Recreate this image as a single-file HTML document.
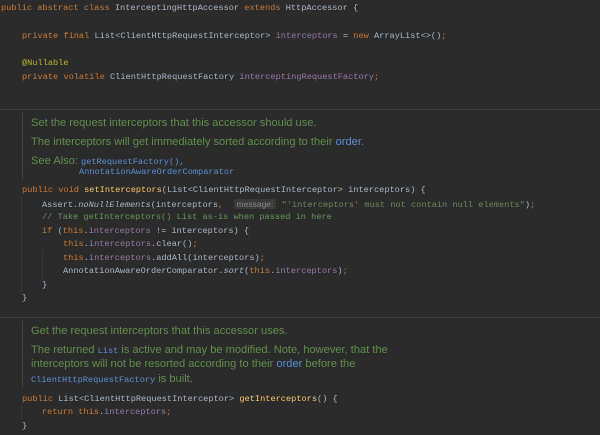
<!DOCTYPE html><html><head><style>
body{margin:0;width:600px;height:435px;background:#2b2b2b;overflow:hidden;position:relative}
.l{position:absolute;white-space:pre;font-family:"Liberation Mono",monospace;font-size:8.65px;line-height:14px;color:#a9b7c6}
.d{position:absolute;white-space:pre;font-family:"Liberation Sans",sans-serif;font-size:11.1px;line-height:14px;color:#5f8f4a}
.k{color:#cc7832}.f{color:#9876aa}.a{color:#bbb529}.m{color:#ffc66d}.s{color:#6a8759}.c{color:#629755}.i{font-style:italic}
.b{color:#5a8fd6}.bm{color:#5a8fd6;font-family:"Liberation Mono",monospace;font-size:8.65px}
.sep{position:absolute;left:0;width:600px;height:1px;background:#3c3c3c}
.bar{position:absolute;left:22px;width:1px;background:#3d4a3a}
.g{position:absolute;width:1px;background:#363636}
.hint{background:#3a3a3a;color:#8a8a8a;font-family:"Liberation Sans",sans-serif;font-size:8.5px;padding:0 3px;border-radius:2px}
</style></head><body>
<div class="l" style="left:1px;top:1px"><span class="k">public abstract class </span>InterceptingHttpAccessor <span class="k">extends </span>HttpAccessor {</div>
<div class="l" style="left:22px;top:29px"><span class="k">private final </span>List&lt;ClientHttpRequestInterceptor&gt; <span class="f">interceptors </span>= <span class="k">new </span>ArrayList&lt;&gt;()<span class="k">;</span></div>
<div class="l" style="left:22px;top:56px"><span class="a">@Nullable</span></div>
<div class="l" style="left:22px;top:70px"><span class="k">private volatile </span>ClientHttpRequestFactory <span class="f">interceptingRequestFactory</span><span class="k">;</span></div>
<div class="sep" style="top:109px"></div>
<div class="bar" style="top:113px;height:67px"></div>
<div class="d" style="left:31px;top:116px">Set the request interceptors that this accessor should use.</div>
<div class="d" style="left:31px;top:135px">The interceptors will get immediately sorted according to their <span class="b">order</span>.</div>
<div class="d" style="left:31px;top:154px">See Also: <span class="bm">getRequestFactory(),</span></div>
<div class="l" style="left:79px;top:165px;color:#5a8fd6">AnnotationAwareOrderComparator</div>
<div class="g" style="left:21px;top:196px;height:98px"></div>
<div class="g" style="left:42px;top:250px;height:30px"></div>
<div class="l" style="left:22px;top:183px"><span class="k">public void </span><span class="m">setInterceptors</span>(List&lt;ClientHttpRequestInterceptor&gt; interceptors) {</div>
<div class="l" style="left:42px;top:197px">Assert.<span class="i">noNullElements</span>(interceptors<span class="k">, </span> <span class="hint">message:</span> <span class="s">"'interceptors' must not contain null elements"</span>)<span class="k">;</span></div>
<div class="l" style="left:42px;top:210px"><span class="c">// Take getInterceptors() List as-is when passed in here</span></div>
<div class="l" style="left:42px;top:224px"><span class="k">if </span>(<span class="k">this</span>.<span class="f">interceptors </span>!= interceptors) {</div>
<div class="l" style="left:63px;top:237px"><span class="k">this</span>.<span class="f">interceptors</span>.clear()<span class="k">;</span></div>
<div class="l" style="left:63px;top:251px"><span class="k">this</span>.<span class="f">interceptors</span>.addAll(interceptors)<span class="k">;</span></div>
<div class="l" style="left:63px;top:264px">AnnotationAwareOrderComparator.<span class="i">sort</span>(<span class="k">this</span>.<span class="f">interceptors</span>)<span class="k">;</span></div>
<div class="l" style="left:42px;top:278px">}</div>
<div class="l" style="left:22px;top:291px">}</div>
<div class="sep" style="top:317px"></div>
<div class="bar" style="top:321px;height:67px"></div>
<div class="d" style="left:31px;top:324px">Get the request interceptors that this accessor uses.</div>
<div class="d" style="left:31px;top:343px">The returned <span class="bm">List</span> is active and may be modified. Note, however, that the</div>
<div class="d" style="left:31px;top:357px">interceptors will not be resorted according to their <span class="b">order</span> before the</div>
<div class="d" style="left:31px;top:372px"><span class="bm">ClientHttpRequestFactory</span> is built.</div>
<div class="g" style="left:21px;top:405px;height:14px"></div>
<div class="l" style="left:22px;top:392px"><span class="k">public </span>List&lt;ClientHttpRequestInterceptor&gt; <span class="m">getInterceptors</span>() {</div>
<div class="l" style="left:42px;top:405px"><span class="k">return this</span>.<span class="f">interceptors</span><span class="k">;</span></div>
<div class="l" style="left:22px;top:419px">}</div>
</body></html>
